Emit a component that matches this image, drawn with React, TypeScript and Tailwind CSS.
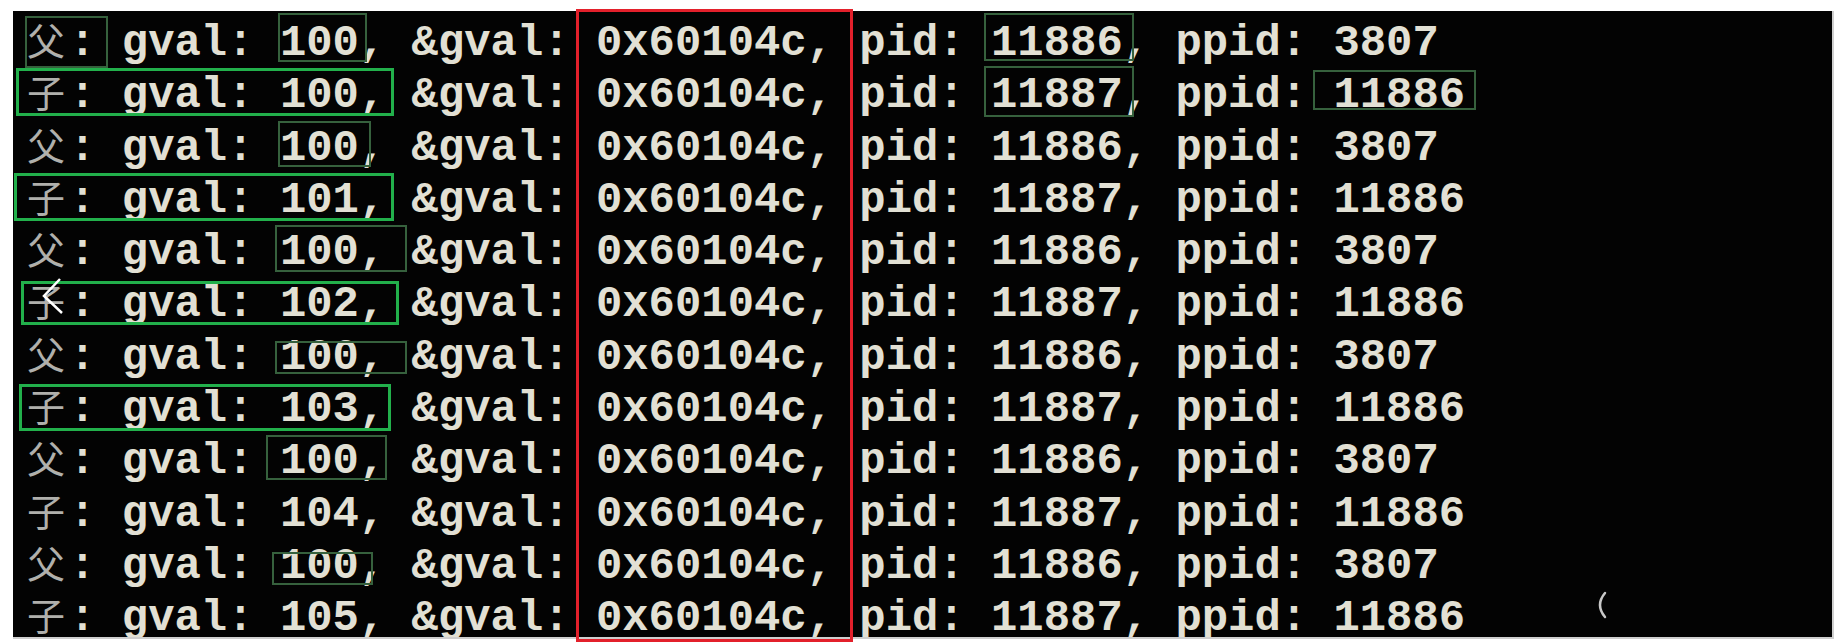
import React from "react";

const rows = [
  { who: "父", gval: "100", pid: "11886", ppid: "3807" },
  { who: "子", gval: "100", pid: "11887", ppid: "11886" },
  { who: "父", gval: "100", pid: "11886", ppid: "3807" },
  { who: "子", gval: "101", pid: "11887", ppid: "11886" },
  { who: "父", gval: "100", pid: "11886", ppid: "3807" },
  { who: "子", gval: "102", pid: "11887", ppid: "11886" },
  { who: "父", gval: "100", pid: "11886", ppid: "3807" },
  { who: "子", gval: "103", pid: "11887", ppid: "11886" },
  { who: "父", gval: "100", pid: "11886", ppid: "3807" },
  { who: "子", gval: "104", pid: "11887", ppid: "11886" },
  { who: "父", gval: "100", pid: "11886", ppid: "3807" },
  { who: "子", gval: "105", pid: "11887", ppid: "11886" },
];

function TermLine({ who, gval, pid, ppid }: { who: string; gval: string; pid: string; ppid: string }) {
  return (
    <div className="h-[52.3px] leading-[52.3px] whitespace-pre">
      <span className="inline-block w-[2ch] text-left font-normal text-[38px] text-[#b0b0ac] font-['Noto_Sans_CJK_SC',sans-serif]">
        {who}
      </span>
      {`: gval: ${gval}, &gval: 0x60104c, pid: ${pid}, ppid: ${ppid}`}
    </div>
  );
}

export default function App() {
  return (
    <div className="relative w-[1841px] h-[644px] bg-white pt-[11px] pl-[13px] overflow-hidden">
      {/* terminal capture */}
      <div className="flex flex-col w-[1821px] h-[628px] bg-[#030303] border-r-2 border-b-2 border-[#cfcfcf] overflow-hidden pt-[2px] pl-[14px] font-['Liberation_Mono','Noto_Sans_CJK_SC',monospace] font-bold text-[43.9px] text-[#e2e0d4]">
        {rows.map((r, i) => (
          <TermLine key={i} {...r} />
        ))}
      </div>

      {/* red highlight around the address column */}
      <div className="absolute left-[576px] top-[9px] w-[277px] h-[633px] border-[3px] border-[#e3202b]" />

      {/* bright green boxes on the child lines */}
      <div className="absolute left-[16px] top-[68px] w-[378px] h-[48px] border-[3px] border-[#22b04b]" />
      <div className="absolute left-[14px] top-[173px] w-[380px] h-[48px] border-[3px] border-[#22b04b]" />
      <div className="absolute left-[21px] top-[281px] w-[378px] h-[44px] border-[3px] border-[#22b04b]" />
      <div className="absolute left-[19px] top-[384px] w-[372px] h-[47px] border-[3px] border-[#22b04b]" />

      {/* faint dark green boxes */}
      <div className="absolute left-[25px] top-[16px] w-[83px] h-[52px] border-2 border-[#36613d]" />
      <div className="absolute left-[278px] top-[13px] w-[89px] h-[49px] border-2 border-[#36613d]" />
      <div className="absolute left-[984px] top-[13px] w-[150px] h-[48px] border-2 border-[#36613d]" />
      <div className="absolute left-[984px] top-[66px] w-[150px] h-[51px] border-2 border-[#36613d]" />
      <div className="absolute left-[1313px] top-[70px] w-[163px] h-[40px] border-2 border-[#36613d]" />
      <div className="absolute left-[278px] top-[121px] w-[93px] h-[46px] border-2 border-[#36613d]" />
      <div className="absolute left-[275px] top-[225px] w-[132px] h-[47px] border-2 border-[#36613d]" />
      <div className="absolute left-[275px] top-[341px] w-[132px] h-[33px] border-2 border-[#36613d]" />
      <div className="absolute left-[266px] top-[435px] w-[121px] h-[45px] border-2 border-[#36613d]" />
      <div className="absolute left-[272px] top-[552px] w-[101px] h-[33px] border-2 border-[#36613d]" />

      {/* stray pointer marks */}
      <svg className="absolute left-[38px] top-[274px] w-[30px] h-[44px]" viewBox="0 0 30 44">
        <polyline points="22,5 6,22 24,39" fill="none" stroke="#ffffff" strokeWidth="2.5" />
      </svg>
      <svg className="absolute left-[1590px] top-[588px] w-[20px] h-[34px]" viewBox="0 0 20 34">
        <path d="M15 5 Q5 17 15 29" fill="none" stroke="#c8c8c8" strokeWidth="2.5" strokeLinecap="round" />
      </svg>
    </div>
  );
}
